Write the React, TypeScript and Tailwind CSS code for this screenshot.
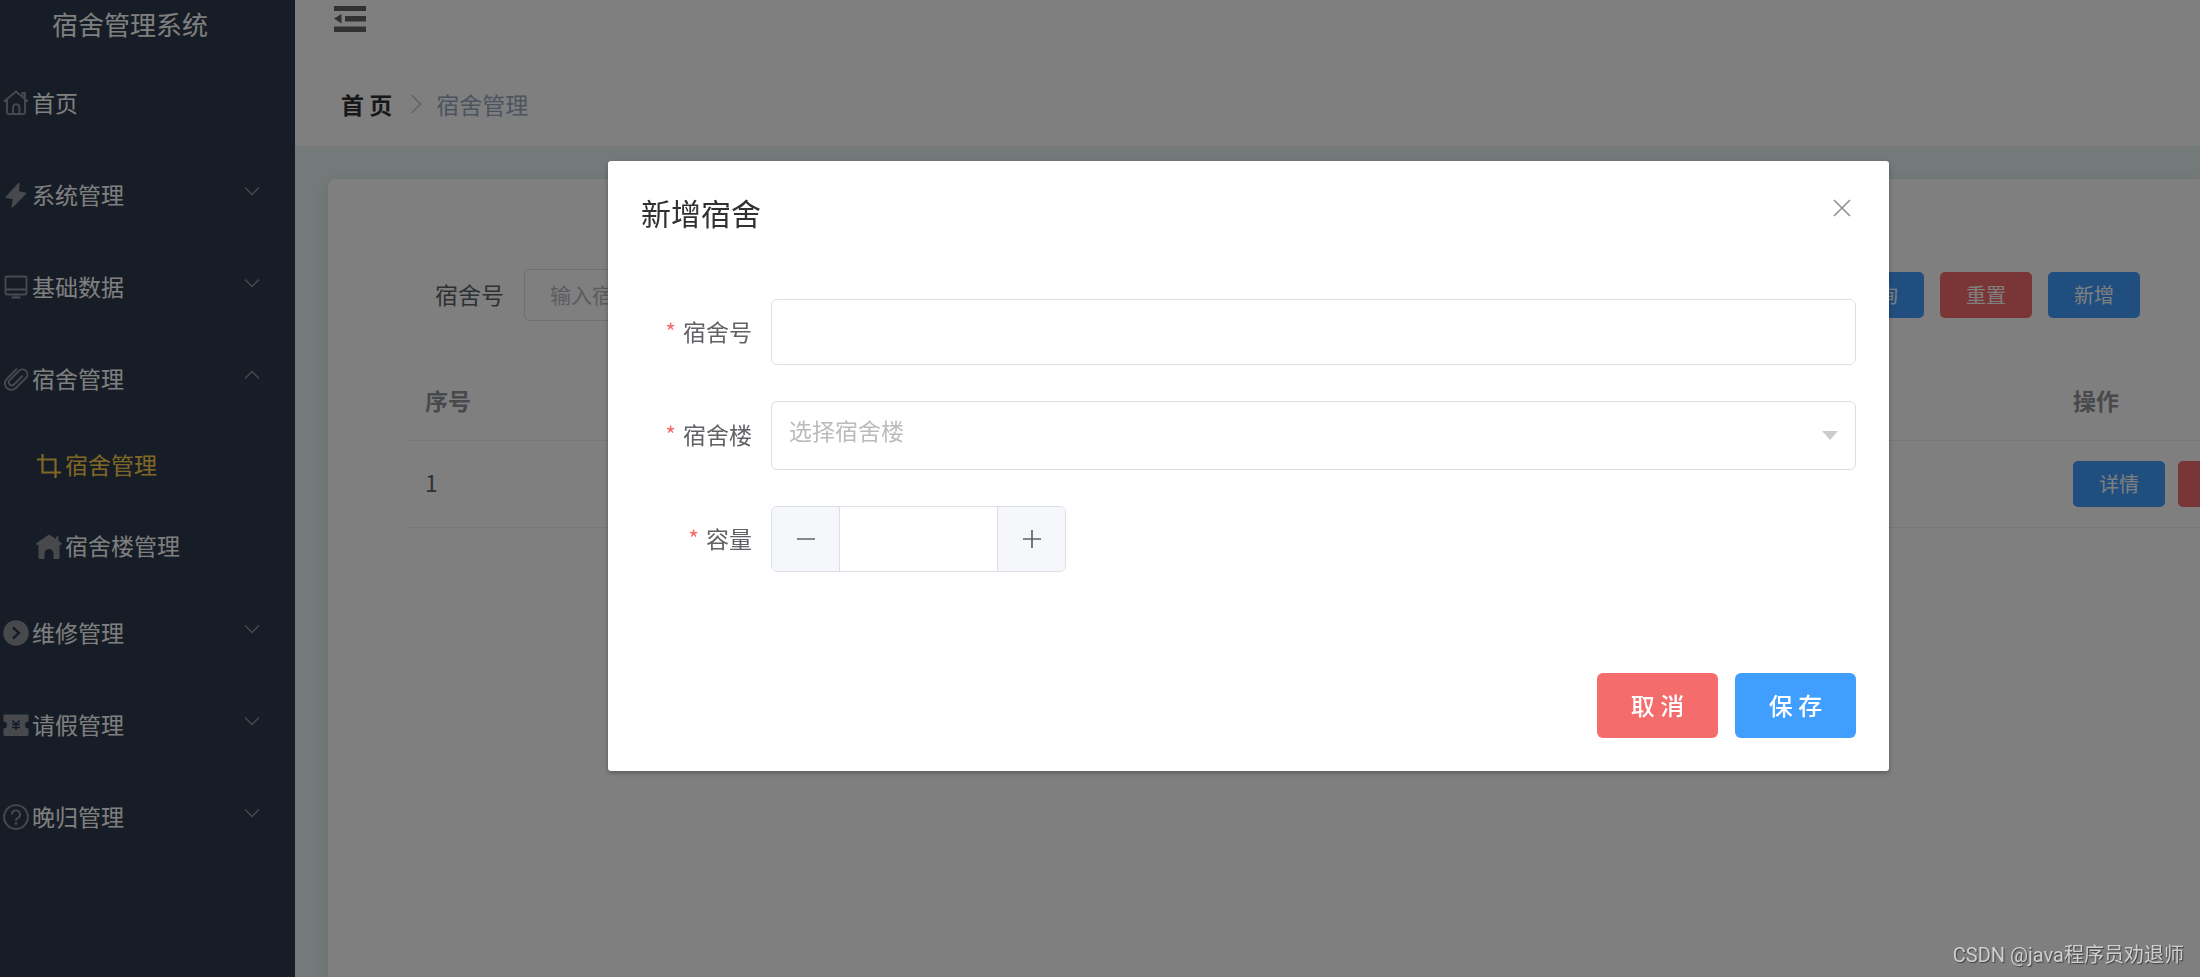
import { useState } from "react";

import { clsx } from "clsx";

type IconName =
  | "home"
  | "lightning"
  | "monitor"
  | "clip"
  | "crop"
  | "house"
  | "arrow"
  | "ticket"
  | "question";

type MenuItem = {
  label: string;
  icon: IconName;
  expandable?: boolean;
  children?: { label: string; icon: IconName; active?: boolean }[];
};

const menuItems: MenuItem[] = [
  { label: "首页", icon: "home" },
  { label: "系统管理", icon: "lightning", expandable: true },
  { label: "基础数据", icon: "monitor", expandable: true },
  {
    label: "宿舍管理",
    icon: "clip",
    expandable: true,
    children: [
      { label: "宿舍管理", icon: "crop", active: true },
      { label: "宿舍楼管理", icon: "house" },
    ],
  },
  { label: "维修管理", icon: "arrow", expandable: true },
  { label: "请假管理", icon: "ticket", expandable: true },
  { label: "晚归管理", icon: "question", expandable: true },
];

function MenuIcon({ name }: { name: IconName }) {
  return (
    <svg
      viewBox="0 0 26 26"
      className="size-[26px] shrink-0"
      fill="none"
      stroke="currentColor"
      strokeWidth="1.9"
      aria-hidden="true"
    >
      {name === "home" && (
        <path d="M1 11.500 13 1.500l12 10M4 9.500V22.500q0 1.500 1.500 1.500h15q1.500 0 1.500-1.500V9.500M19.500 6V3h2.500v5M10 24v-6.500a3.200 3.200 0 0 1 6.400 0V24" />
      )}
      {name === "lightning" && (
        <path
          d="M15 1.200 3 14.500q-.8 1.200.5 1.500l6.500 1.200L8.500 24.500q.2 2 1.700.5L23 12q.8-1.200-.5-1.500L16 9.200 16.500 2q-.2-1.800-1.500-.8z"
          fill="currentColor"
          stroke="none"
        />
      )}
      {name === "monitor" && (
        <path d="M4 2.500h18q1.500 0 1.500 1.500v15q0 1.500-1.500 1.500H4q-1.500 0-1.500-1.500V4q0-1.500 1.500-1.500zM2.500 15.500h21M13 20.500v3M8.500 23.500h9" />
      )}
      {name === "clip" && (
        <path d="M14 2.700 3.800 13a6.300 6.300 0 0 0 9 9L23 11.800a4.900 4.900 0 0 0-7-7L6.700 14.200a3 3 0 0 0 4.300 4.300l8.700-8.800" />
      )}
      {name === "crop" && (
        <path d="M6.500 1V19.500H25M1 6.500H19.500V25" strokeWidth="2.200" />
      )}
      {name === "house" && (
        <path
          d="M13 .5 20 5V2.500h2.500v4.300L26 9.500l-1 1.800-1.500-.6V23.500q0 1.500-1.500 1.500h-4.500v-5.500a4.500 4.500 0 0 0-9 0V25H4Q2.500 25 2.500 23.500V10.700L1 11.300 0 9.500z"
          fill="currentColor"
          stroke="none"
        />
      )}
      {name === "arrow" && (
        <>
          <circle cx="13" cy="13" r="12.700" fill="currentColor" stroke="none" />
          <path d="m10 7.500 6 5.500-6 5.500" stroke="#2e3b4e" strokeWidth="2.400" />
        </>
      )}
      {name === "ticket" && (
        <>
          <path
            d="M1.500 2.500h23q1 0 1 1v6a3.500 3.500 0 0 0 0 7V23q0 1-1 1h-23q-1 0-1-1v-6.500a3.500 3.500 0 0 0 0-7v-6q0-1 1-1z"
            fill="currentColor"
            stroke="none"
          />
          <path
            d="m9.500 8.500 3.500 4 3.500-4M9 12.500h8M9 15.500h8M13 12.500V18"
            stroke="#2e3b4e"
            strokeWidth="1.700"
          />
        </>
      )}
      {name === "question" && (
        <>
          <circle cx="13" cy="13" r="11.900" />
          <path d="M9 10.500a4 4 0 1 1 5.700 3.500q-1.700.7-1.700 2.700" />
          <path d="M13 18.300v2.400" strokeWidth="2.400" />
        </>
      )}
    </svg>
  );
}

function Chevron({ up = false }: { up?: boolean }) {
  return (
    <svg
      viewBox="0 0 16 10"
      className="mb-2 h-[10px] w-4"
      fill="none"
      stroke="#909399"
      strokeWidth="1.300"
      aria-hidden="true"
    >
      <path d={up ? "m1 8.500 7-7 7 7" : "m1 1.500 7 7 7-7"} />
    </svg>
  );
}

function Sidebar() {
  return (
    <aside className="w-[295px] shrink-0 bg-[#2e3b4e] text-white">
      <h1 className="h-[57px] pt-[6px] pl-[52px] text-[26px] leading-9">
        宿舍管理系统
      </h1>
      <nav>
        <ul>
          {menuItems.map((item) => (
            <li key={item.label}>
              <a
                href="#"
                className="flex h-[92px] items-center pr-[35px] pl-[3px] text-[23px]"
              >
                <span className="text-[#909399]">
                  <MenuIcon name={item.icon} />
                </span>
                <span className="flex-1 pb-[2px] pl-[3px]">{item.label}</span>
                {item.expandable && <Chevron up={!!item.children} />}
              </a>
              {item.children && (
                <ul>
                  {item.children.map((child) => (
                    <li key={child.label}>
                      <a
                        href="#"
                        className={clsx(
                          "flex h-[81px] items-center pl-9 text-[23px]",
                          child.active && "text-[#ffd04b]",
                        )}
                      >
                        <span className={clsx(!child.active && "text-[#909399]")}>
                          <MenuIcon name={child.icon} />
                        </span>
                        <span className="pb-[2px] pl-[3px]">{child.label}</span>
                      </a>
                    </li>
                  ))}
                </ul>
              )}
            </li>
          ))}
        </ul>
      </nav>
    </aside>
  );
}

function PageHeader() {
  return (
    <header className="h-[146px] bg-white pt-[6px] pl-[39px]">
      <button type="button" aria-label="折叠菜单" className="block">
        <svg viewBox="0 0 32 26" className="h-[26px] w-8" fill="#606266">
          <path d="M0 0h32v5H0zM11 10h21v5.500H11zM0 20.500h32V26H0zM0 12.500 7.500 8v9.500z" />
        </svg>
      </button>
      <nav
        aria-label="面包屑"
        className="mt-[56px] flex items-center pl-[7px] text-[23px] leading-8"
      >
        <a href="#" className="font-bold text-[#303133]">
          首 页
        </a>
        <svg
          viewBox="0 0 12 20"
          className="mr-[14px] ml-[18px] h-5 w-3"
          fill="none"
          stroke="#c0c4cc"
          strokeWidth="1.500"
          aria-hidden="true"
        >
          <path d="m1.500 1 9 9-9 9" />
        </svg>
        <span className="text-[#97a8be]">宿舍管理</span>
      </nav>
    </header>
  );
}

type SmallButtonProps = {
  label: string;
  danger?: boolean;
  iconOnly?: boolean;
};

function SmallButton({ label, danger = false, iconOnly = false }: SmallButtonProps) {
  return (
    <button
      type="button"
      aria-label={label}
      className={clsx(
        "h-[46px] w-[92px] shrink-0 rounded-[5px] text-xl text-white",
        danger ? "bg-[#f56c6c]" : "bg-[#409eff]",
      )}
    >
      {!iconOnly && label}
    </button>
  );
}

function DormitoryPanel() {
  return (
    <section className="min-h-[900px] rounded-tl-lg bg-white pt-[90px] pl-[81px] shadow-[0_3px_20px_rgba(0,0,0,0.1)]">
      <form className="flex items-center pr-[60px] pl-[26px]">
        <label htmlFor="keyword" className="pb-[2px] text-[23px] text-[#606266]">
          宿舍号
        </label>
        <input
          id="keyword"
          placeholder="输入宿舍号"
          className="ml-5 h-[52px] w-[340px] rounded-md border border-[#dcdfe6] px-[25px] pb-[2px] text-[21px] placeholder:text-[#b4b8c0]"
        />
        <div className="ml-auto flex gap-4">
          <SmallButton label="查询" />
          <SmallButton label="重置" danger />
          <SmallButton label="新增" />
        </div>
      </form>
      <table className="mt-[39px] w-full table-fixed text-left text-[23px] text-[#606266]">
        <thead className="text-[#909399]">
          <tr className="h-[80px] border-b border-[#ebeef5]">
            <th className="pl-4 font-bold">序号</th>
            <th className="w-[127px] font-bold">操作</th>
          </tr>
        </thead>
        <tbody>
          <tr className="h-[87px] border-b border-[#ebeef5]">
            <td className="pl-4 pb-[2px]">1</td>
            <td>
              <div className="flex gap-[13px]">
                <SmallButton label="详情" />
                <SmallButton label="删除" danger iconOnly />
              </div>
            </td>
          </tr>
        </tbody>
      </table>
    </section>
  );
}

function FieldLabel({ htmlFor, text }: { htmlFor: string; text: string }) {
  return (
    <label
      htmlFor={htmlFor}
      className="flex w-[130px] shrink-0 justify-end gap-[7px] pr-[19px] pb-[2px] text-[23px] text-[#606266]"
    >
      <span className="text-[#f56c6c]">*</span>
      {text}
    </label>
  );
}

function AddDormitoryDialog() {
  const [capacity, setCapacity] = useState("");

  const stepCapacity = (step: number) =>
    setCapacity((prev) => String(Math.max(0, Number(prev) + step)));

  return (
    <div className="fixed inset-0 flex items-start justify-center overflow-hidden bg-black/50 pt-[161px] pl-[297px]">
      <div
        role="dialog"
        aria-labelledby="dialog-title"
        className="w-[1281px] rounded-[3px] bg-white px-[33px] pb-[33px] shadow-[0_2px_5px_rgba(0,0,0,0.3)]"
      >
        <div className="flex h-[138px] items-start justify-between">
          <h2 id="dialog-title" className="pt-[29px] text-[30px] leading-11 text-[#303133]">
            新增宿舍
          </h2>
          <button type="button" aria-label="关闭" className="mt-[38px] mr-[5px]">
            <svg viewBox="0 0 18 18" className="size-[18px]" stroke="#909399" strokeWidth="1.700">
              <path d="m1 1 16 16M17 1 1 17" />
            </svg>
          </button>
        </div>

        <form>
          <div className="flex items-center">
            <FieldLabel htmlFor="dorm-no" text="宿舍号" />
            <input
              id="dorm-no"
              className="h-[66px] flex-1 rounded-md border border-[#dcdfe6] px-4 text-[23px]"
            />
          </div>

          <div className="mt-9 flex items-center">
            <FieldLabel htmlFor="building" text="宿舍楼" />
            <div className="grid flex-1 items-center">
              <select
                id="building"
                defaultValue=""
                className="col-start-1 row-start-1 h-[69px] appearance-none rounded-md border border-[#dcdee2] bg-white px-[17px] pb-[10px] text-[23px] text-[#bbbbbb]"
              >
                <option value="">选择宿舍楼</option>
              </select>
              <svg
                viewBox="0 0 16 9"
                className="pointer-events-none col-start-1 row-start-1 mr-[18px] h-[9px] w-4 justify-self-end"
                fill="#cccccc"
                aria-hidden="true"
              >
                <path d="M0 0h16L8 9z" />
              </svg>
            </div>
          </div>

          <div className="mt-9 flex items-center">
            <FieldLabel htmlFor="capacity" text="容量" />
            <div className="flex h-[66px] w-[295px] overflow-hidden rounded-md border border-[#dcdfe6] text-[#606266]">
              <button
                type="button"
                aria-label="减少"
                onClick={() => stepCapacity(-1)}
                className="flex w-[68px] items-center justify-center border-r border-[#dcdfe6] bg-[#f5f7fa]"
              >
                <svg viewBox="0 0 18 18" className="size-[18px]" stroke="currentColor" strokeWidth="1.700">
                  <path d="M0 9h18" />
                </svg>
              </button>
              <input
                id="capacity"
                value={capacity}
                onChange={(e) => setCapacity(e.target.value)}
                className="min-w-0 flex-1 text-center text-[23px]"
              />
              <button
                type="button"
                aria-label="增加"
                onClick={() => stepCapacity(1)}
                className="flex w-[68px] items-center justify-center border-l border-[#dcdfe6] bg-[#f5f7fa]"
              >
                <svg viewBox="0 0 18 18" className="size-[18px]" stroke="currentColor" strokeWidth="1.700">
                  <path d="M0 9h18M9 0v18" />
                </svg>
              </button>
            </div>
          </div>

          <div className="mt-[101px] flex justify-end gap-[17px] text-[24px] font-medium text-white">
            <button type="button" className="h-[65px] w-[121px] rounded-md bg-[#f56c6c] pb-[2px]">
              取 消
            </button>
            <button type="button" className="h-[65px] w-[121px] rounded-md bg-[#409eff] pb-[2px]">
              保 存
            </button>
          </div>
        </form>
      </div>
    </div>
  );
}

export default function App() {
  return (
    <div className="flex h-screen overflow-hidden bg-white font-['Noto_Sans_CJK_SC',sans-serif]">
      <Sidebar />
      <main className="min-w-0 flex-1 bg-[#e9f4f5]">
        <PageHeader />
        <div className="pt-[33px] pl-[33px]">
          <DormitoryPanel />
        </div>
      </main>
      <AddDormitoryDialog />
      {/* 右下角水印 */}
      <p className="fixed right-4 bottom-2 font-[Roboto,'Noto_Sans_CJK_SC',sans-serif] text-xl text-[#cfcfcf] [text-shadow:1px_1px_1px_#404040]">
        CSDN @java程序员劝退师
      </p>
    </div>
  );
}
